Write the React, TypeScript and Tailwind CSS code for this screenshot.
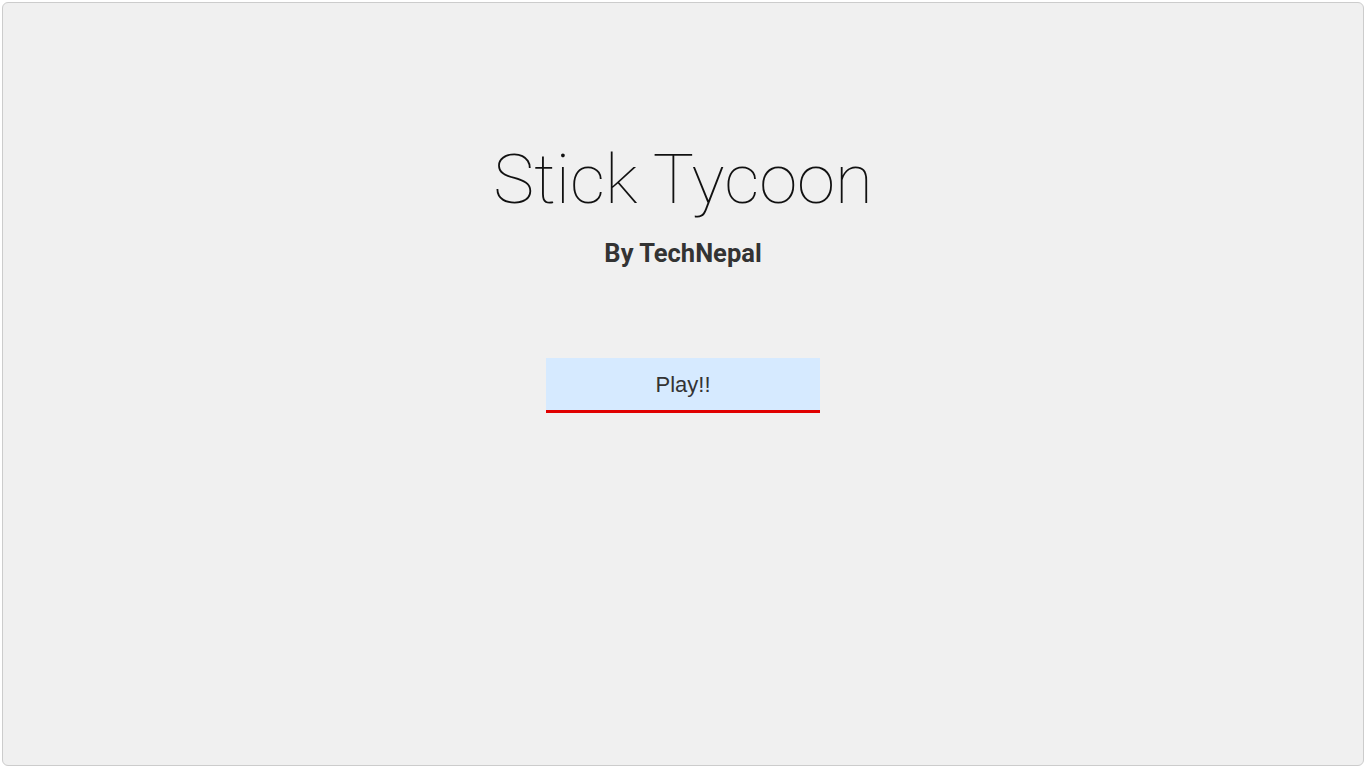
export default function App() {
  return (
    <div className="w-[1366px] h-[768px] bg-white p-[2px]">
      <div className="w-full h-full bg-[#f0f0f0] border border-[#cccccc] rounded-[6px] flex flex-col items-center">
        <h1 className="mt-[137px] text-[69px] leading-[80px] font-thin text-[#111111] [font-family:Roboto,sans-serif]">Stick Tycoon</h1>
        <p className="mt-[17px] text-[25.5px] leading-[32px] font-bold text-[#333333] [font-family:Roboto,sans-serif]">By TechNepal</p>
        <button className="mt-[89px] w-[274px] h-[55px] bg-[#d6eaff] border-b-[3px] border-[#e00000] text-[22px] text-[#333333] [font-family:'Liberation_Sans',Arial,sans-serif]">Play!!</button>
      </div>
    </div>
  );
}
